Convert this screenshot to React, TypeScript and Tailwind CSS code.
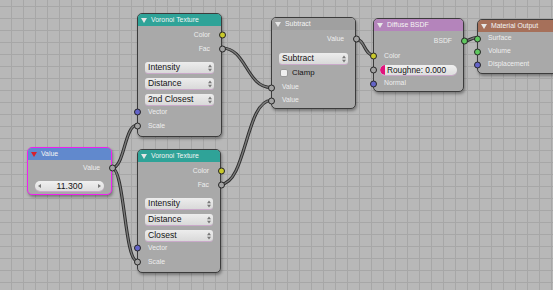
import React from "react";

type SocketKind = "color" | "float" | "vector" | "shader";

const socketFill: Record<SocketKind, string> = {
  color: "bg-[#c9c92a]",
  float: "bg-[#a3a3a3]",
  vector: "bg-[#6464c8]",
  shader: "bg-[#5fc75f]",
};

function Socket({ kind, side }: { kind: SocketKind; side: "in" | "out" }) {
  return (
    <span
      className={`absolute top-1/2 -translate-y-1/2 w-[7px] h-[7px] rounded-full border border-[#262626] ${socketFill[kind]} ${
        side === "in" ? "left-[-4.5px]" : "right-[-4.5px]"
      }`}
    />
  );
}

function Row({
  label,
  kind,
  side,
  h = "h-[14px]",
}: {
  label: string;
  kind: SocketKind;
  side: "in" | "out";
  h?: string;
}) {
  return (
    <div
      className={`relative ${h} flex items-center text-[6.8px] leading-none text-[#eeeeee] ${
        side === "out" ? "justify-end pr-[11px]" : "justify-start pl-[10px]"
      }`}
    >
      <span>{label}</span>
      <Socket kind={kind} side={side} />
    </div>
  );
}

function Tri({ color }: { color: string }) {
  return (
    <svg width="6" height="5" viewBox="0 0 6 5" className="shrink-0">
      <path d="M0 0 H6 L3 5 Z" fill={color} />
    </svg>
  );
}

function Header({ tone, title, tri = "#e6e6e6" }: { tone: string; title: string; tri?: string }) {
  return (
    <div
      className={`h-[12px] rounded-t-[4px] flex items-center gap-[3px] pl-[3px] text-[6.9px] leading-none text-[#f4f4f4] ${tone}`}
    >
      <Tri color={tri} />
      <span className="pl-[1px]">{title}</span>
    </div>
  );
}

function UpDown() {
  return (
    <svg width="4" height="8" viewBox="0 0 4 8">
      <path d="M0 3.2 L2 0.4 L4 3.2 Z" fill="#777" />
      <path d="M0 4.8 L2 7.6 L4 4.8 Z" fill="#777" />
    </svg>
  );
}

function Dropdown({ label }: { label: string }) {
  return (
    <div className="mx-[7px] h-[11px] rounded-[3px] bg-[linear-gradient(to_bottom,#ededed,#d9d9d9)] shadow-[0_1px_0_#c9a9c9] flex items-center justify-between pl-[3px] pr-[2px] text-[8.6px] leading-none text-[#141414]">
      <span>{label}</span>
      <UpDown />
    </div>
  );
}

function Node({
  x,
  y,
  w,
  selected = false,
  children,
}: {
  x: string;
  y: string;
  w: string;
  selected?: boolean;
  children: React.ReactNode;
}) {
  return (
    <div
      className={`absolute ${x} ${y} ${w} rounded-[5px] bg-[#a9a9a9] shadow-[1px_2px_3px_rgba(0,0,0,0.35)] ${
        selected ? "border-[1.5px] border-[#f020f0]" : "border border-[#3c3c3c]"
      }`}
    >
      {children}
    </div>
  );
}

function VoronoiBody({ mode }: { mode: string }) {
  return (
    <div className="pt-[2px] pb-[3px] flex flex-col">
      <Row label="Color" kind="color" side="out" />
      <Row label="Fac" kind="float" side="out" />
      <div className="mt-[6px] flex flex-col gap-[5px]">
        <Dropdown label="Intensity" />
        <Dropdown label="Distance" />
        <Dropdown label={mode} />
      </div>
      <Row label="Vector" kind="vector" side="in" />
      <Row label="Scale" kind="float" side="in" />
    </div>
  );
}

function wire(x1: number, y1: number, x2: number, y2: number) {
  const d = Math.abs(x2 - x1) * 0.5;
  return `M${x1} ${y1} C${x1 + d} ${y1} ${x2 - d} ${y2} ${x2} ${y2}`;
}

const links: [number, number, number, number][] = [
  [222, 48, 271, 87.5],
  [221, 184, 271, 100.5],
  [112, 168, 137, 125],
  [112, 168, 137, 261],
  [356, 39, 373, 55],
  [464, 41, 477, 37.5],
];

export default function App() {
  return (
    <div className="relative w-[553px] h-[290px] overflow-hidden font-['Liberation_Sans',Arial,sans-serif] bg-[#b8b8b8] bg-[linear-gradient(to_right,#a7a7a7_1px,transparent_1px),linear-gradient(to_bottom,#a7a7a7_1px,transparent_1px)] bg-[size:12px_12px] bg-[position:11px_6px]">
      <svg className="absolute inset-0" width="553" height="290">
        {links.map(([a, b, c, d], i) => (
          <g key={i} fill="none" strokeLinecap="round">
            <path d={wire(a, b, c, d)} stroke="#2e2e2e" strokeWidth="3.2" />
            <path d={wire(a, b, c, d)} stroke="#7c7c7c" strokeWidth="1.3" />
          </g>
        ))}
      </svg>

      {/* Value */}
      <Node x="left-[27px]" y="top-[147px]" w="w-[85px]" selected>
        <Header tone="bg-[#6189cd]" title="Value" tri="#d8202c" />
        <div className="pt-[1px] pb-[3px] flex flex-col">
          <Row label="Value" kind="float" side="out" />
          <div className="mt-[6px] mx-[7px] h-[10px] rounded-full bg-[linear-gradient(to_bottom,#f0f0f0,#dedede)] shadow-[0_1px_0_#c9a9c9] flex items-center justify-between px-[3px] text-[8.7px] leading-none text-[#141414]">
            <svg width="3" height="4" viewBox="0 0 3 4">
              <path d="M3 0 L0 2 L3 4 Z" fill="#777" />
            </svg>
            <span>11.300</span>
            <svg width="3" height="4" viewBox="0 0 3 4">
              <path d="M0 0 L3 2 L0 4 Z" fill="#777" />
            </svg>
          </div>
        </div>
      </Node>

      {/* Voronoi Texture (upper) */}
      <Node x="left-[137px]" y="top-[13px]" w="w-[85px]">
        <Header tone="bg-[#2fa398]" title="Voronoi Texture" />
        <VoronoiBody mode="2nd Closest" />
      </Node>

      {/* Voronoi Texture (lower) */}
      <Node x="left-[137px]" y="top-[149px]" w="w-[84px]">
        <Header tone="bg-[#2fa398]" title="Voronoi Texture" />
        <VoronoiBody mode="Closest" />
      </Node>

      {/* Subtract */}
      <Node x="left-[271px]" y="top-[17px]" w="w-[85px]">
        <Header tone="bg-[#a0a0a0]" title="Subtract" />
        <div className="pt-[2px] pb-[1px] flex flex-col">
          <Row label="Value" kind="float" side="out" />
          <div className="mt-[7px]">
            <Dropdown label="Subtract" />
          </div>
          <div className="mt-[3px] h-[12px] flex items-center gap-[5px] pl-[9px] text-[7.8px] leading-none text-[#141414]">
            <span className="w-[6px] h-[6px] rounded-[1px] bg-[#f0f0f0] shadow-[0_0_0_0.5px_#8a8a8a]" />
            <span>Clamp</span>
          </div>
          <div className="mt-[2px]">
            <Row label="Value" kind="float" side="in" h="h-[13px]" />
            <Row label="Value" kind="float" side="in" h="h-[13px]" />
          </div>
        </div>
      </Node>

      {/* Diffuse BSDF */}
      <Node x="left-[373px]" y="top-[18px]" w="w-[91px]">
        <Header tone="bg-[#b484bb]" title="Diffuse BSDF" />
        <div className="pt-[3px] pb-[1px] flex flex-col">
          <Row label="BSDF" kind="shader" side="out" />
          <div className="mt-[1px]">
            <Row label="Color" kind="color" side="in" />
          </div>
          <div className="relative h-[14px] flex items-center px-[6px]">
            <Socket kind="float" side="in" />
            <div className="relative w-full h-[10px] rounded-full bg-[linear-gradient(to_bottom,#f0f0f0,#dedede)] shadow-[0_1px_0_#c9a9c9] overflow-hidden flex items-center pl-[7px] text-[8.3px] leading-none text-[#141414]">
              <span className="absolute left-0 top-0 h-full w-[5px] rounded-l-full bg-[#e2137d]" />
              <span>Roughne: 0.000</span>
            </div>
          </div>
          <Row label="Normal" kind="vector" side="in" h="h-[13px]" />
        </div>
      </Node>

      {/* Material Output */}
      <Node x="left-[477px]" y="top-[19px]" w="w-[100px]">
        <Header tone="bg-[#a6705a]" title="Material Output" />
        <div className="pb-[2px] flex flex-col">
          <Row label="Surface" kind="shader" side="in" h="h-[13px]" />
          <Row label="Volume" kind="shader" side="in" h="h-[13px]" />
          <Row label="Displacement" kind="vector" side="in" h="h-[13px]" />
        </div>
      </Node>
    </div>
  );
}
